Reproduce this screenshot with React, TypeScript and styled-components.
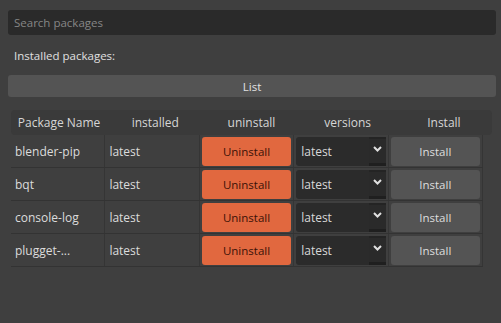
import React from "react";
import styled, { createGlobalStyle } from "styled-components";

const Global = createGlobalStyle`
  html, body { margin: 0; padding: 0; background: #3f3f3f; }
  body { font-family: "Open Sans", "Noto Sans", sans-serif; font-size: 11.5px; color: #dadada; }
  * { box-sizing: border-box; }
`;

const Panel = styled.div`
  width: 501px;
  height: 323px;
  background: #3f3f3f;
  padding: 10px 5px 0 8px;
  display: flex;
  flex-direction: column;
`;

const Search = styled.input`
  height: 25px;
  width: 100%;
  background: #2a2a2a;
  border: none;
  border-radius: 3px;
  padding: 0 6px;
  font: inherit;
  color: #dadada;
  outline: none;
  &::placeholder { color: #868686; }
`;

const Label = styled.div`
  margin-top: 13px;
  height: 16px;
  line-height: 16px;
  padding-left: 6px;
  color: #e0e0e0;
`;

const GreyButton = styled.div`
  background: #545454;
  border-radius: 3px;
  color: #e2e2e2;
  display: flex;
  align-items: center;
  justify-content: center;
  cursor: pointer;
  user-select: none;
`;

const ListButton = styled(GreyButton)`
  margin-top: 11px;
  height: 22px;
  width: 100%;
`;

const TableWrap = styled.div`
  margin-top: 13px;
  padding-left: 3px;
  display: flex;
  flex-direction: column;
  font-size: 12px;
`;

const Header = styled.div`
  width: 481px;
  height: 25px;
  background: #3a3a3a;
  border-radius: 4px;
  display: grid;
  grid-template-columns: repeat(5, 1fr);
  align-items: center;
`;

const HeadCell = styled.div`
  text-align: center;
  color: #d6d6d6;
`;

const Body = styled.div`
  width: 472px;
  display: flex;
  flex-direction: column;
`;

const Row = styled.div`
  display: grid;
  grid-template-columns: repeat(5, 1fr);
  height: 33px;
  border-bottom: 1px solid #333333;
`;

const Cell = styled.div`
  display: flex;
  align-items: center;
  padding: 0 2px;
  border-right: 1px solid #353535;
  min-width: 0;
`;

const TextCell = styled(Cell)`
  padding-left: 4px;
  color: #dcdcdc;
  white-space: nowrap;
  overflow: hidden;
`;

const Uninstall = styled.div`
  width: 100%;
  height: 29px;
  background: #e1683f;
  border-radius: 3px;
  font-size: 11.5px;
  color: #3a1207;
  display: flex;
  align-items: center;
  justify-content: center;
  cursor: pointer;
  user-select: none;
`;

const InstallBtn = styled(GreyButton)`
  width: 100%;
  height: 29px;
  color: #dedede;
  font-size: 11.5px;
`;

const Select = styled.div`
  position: relative;
  width: 100%;
  height: 29px;
  background: #2b2b2b;
  border-radius: 3px 0 0 3px;
  display: flex;
  align-items: center;
  padding-left: 5px;
  color: #d8d8d8;
`;

const Arrow = styled.div`
  position: absolute;
  right: 0;
  top: 0;
  bottom: 0;
  width: 17px;
  background: #2a2a2a;
  border-top: 2px solid #242424;
  border-bottom: 3px solid #1f1f1f;
  display: flex;
  align-items: center;
  justify-content: center;
  padding-bottom: 3px;
`;

const Chevron = () => (
  <svg width="9" height="6" viewBox="0 0 9 6">
    <polyline points="1,1 4.5,4.5 8,1" fill="none" stroke="#e0e0e0" strokeWidth="2" />
  </svg>
);

const packages = ["blender-pip", "bqt", "console-log", "plugget-..."];

export default function App() {
  return (
    <>
      <Global />
      <Panel>
        <Search placeholder="Search packages" />
        <Label>Installed packages:</Label>
        <ListButton role="button">List</ListButton>
        <TableWrap>
          <Header>
            <HeadCell>Package Name</HeadCell>
            <HeadCell>installed</HeadCell>
            <HeadCell>uninstall</HeadCell>
            <HeadCell>versions</HeadCell>
            <HeadCell>Install</HeadCell>
          </Header>
          <Body>
            {packages.map((p) => (
              <Row key={p}>
                <TextCell>{p}</TextCell>
                <TextCell>latest</TextCell>
                <Cell>
                  <Uninstall role="button">Uninstall</Uninstall>
                </Cell>
                <Cell>
                  <Select>
                    latest
                    <Arrow>
                      <Chevron />
                    </Arrow>
                  </Select>
                </Cell>
                <Cell>
                  <InstallBtn role="button">Install</InstallBtn>
                </Cell>
              </Row>
            ))}
          </Body>
        </TableWrap>
      </Panel>
    </>
  );
}
